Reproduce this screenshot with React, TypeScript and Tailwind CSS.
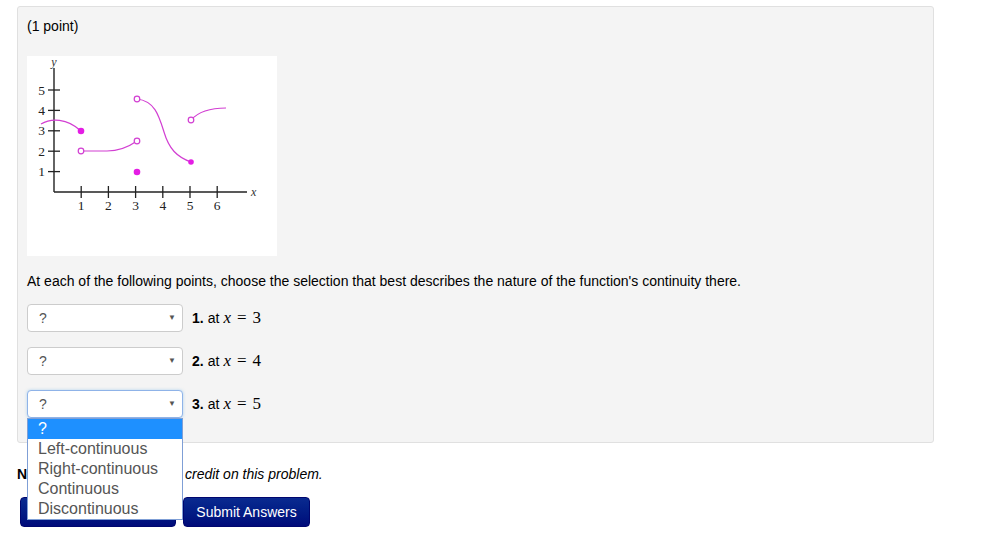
import React from "react";

const MAG = "#d23fd2";
const DOT = "#e41de4";

function Graph() {
  const xs = [1, 2, 3, 4, 5, 6];
  const ys = [1, 2, 3, 4, 5];
  const px = (k: number) => 27 + 27.2 * k;
  const py = (v: number) => 136 - 20.4 * v;
  return (
    <svg width="250" height="200" viewBox="0 0 250 200" className="block">
      <rect width="250" height="200" fill="#ffffff" />
      {/* axes */}
      <line x1="27" y1="12" x2="27" y2="136" stroke="#222" strokeWidth="1.4" />
      <line x1="27" y1="136" x2="220" y2="136" stroke="#222" strokeWidth="1.4" />
      <text x="27" y="10" fontFamily="'Liberation Serif', serif" fontStyle="italic" fontSize="12" textAnchor="middle" fill="#333">y</text>
      <text x="224" y="140" fontFamily="'Liberation Serif', serif" fontStyle="italic" fontSize="12" fill="#333">x</text>
      {ys.map((v) => (
        <g key={v}>
          <line x1="21" y1={py(v)} x2="33" y2={py(v)} stroke="#222" strokeWidth="1.3" />
          <text x="18" y={py(v) + 4.5} fontFamily="'Liberation Serif', serif" fontSize="13.5" textAnchor="end" fill="#222">{v}</text>
        </g>
      ))}
      {xs.map((k) => (
        <g key={k}>
          <line x1={px(k)} y1="130" x2={px(k)} y2="142" stroke="#222" strokeWidth="1.3" />
          <text x={px(k)} y="154" fontFamily="'Liberation Serif', serif" fontSize="13.5" textAnchor="middle" fill="#222">{k}</text>
        </g>
      ))}
      {/* curves */}
      <g fill="none" stroke={MAG} strokeWidth="1.2">
        <path d="M14 68 C 24 62, 40 62, 54 75" />
        <path d="M54 95 L 80 95 C 92 95, 100 92, 110 85" />
        <path d="M110 43 C 128 45, 132 60, 137 76 C 142 93, 150 101, 164 106" />
        <path d="M164 64 C 172 55, 185 52, 199 52" />
      </g>
      {/* filled points */}
      <circle cx="54" cy="75" r="3.3" fill={DOT} />
      <circle cx="110" cy="116" r="3.3" fill={DOT} />
      <circle cx="164" cy="106" r="2.8" fill={DOT} />
      {/* open points */}
      <g fill="#fff" stroke={MAG} strokeWidth="1.2">
        <circle cx="54" cy="95" r="2.8" />
        <circle cx="110" cy="85" r="2.8" />
        <circle cx="110" cy="43" r="2.8" />
        <circle cx="164" cy="64" r="2.8" />
      </g>
    </svg>
  );
}

function Select({ focused }: { focused?: boolean }) {
  return (
    <div
      className={
        "relative w-[156px] h-[28px] bg-white rounded-[4px] border flex items-center pl-[11px] text-[14px] text-[#555] " +
        (focused ? "border-[#8fb3e8] shadow-[0_0_3px_rgba(102,175,233,0.5)]" : "border-[#cccccc]")
      }
    >
      ?
      <span className="absolute right-[6px] top-[9px] text-[8px] leading-none text-[#555]">▼</span>
    </div>
  );
}

function Label({ n, v }: { n: number; v: number }) {
  return (
    <span className="text-[14px] text-black flex items-baseline gap-[4px]">
      <b>{n}.</b>
      <span>at</span>
      <span className="font-['Liberation_Serif',serif] text-[17px]">
        <i>x</i>
        <span className="mx-[6px]">=</span>
        {v}
      </span>
    </span>
  );
}

const options = ["?", "Left-continuous", "Right-continuous", "Continuous", "Discontinuous"];

export default function App() {
  return (
    <div className="min-h-screen bg-white font-['Liberation_Sans',Arial,sans-serif] text-[#222]">
      <div className="pt-[6px] pl-[17px]">
        <div className="w-[917px] h-[437px] bg-[#f4f4f4] border border-[#e0e0e0] rounded-[3px] pt-[10px] pl-[9px]">
          <p className="text-[14px] leading-[18px] text-black">(1 point)</p>
          <div className="mt-[21px]">
            <Graph />
          </div>
          <p className="mt-[16px] text-[14px] leading-[18px] text-black">
            At each of the following points, choose the selection that best describes the nature of the function's continuity there.
          </p>
          <div className="mt-[14px] flex flex-col gap-[15px]">
            {[3, 4, 5].map((v, i) => (
              <div key={v} className="relative flex items-center gap-[9px]">
                <Select focused={i === 2} />
                <Label n={i + 1} v={v} />
                {i === 2 && (
                  <ul className="absolute left-0 top-[28px] w-[156px] bg-white border border-[#7f9fd6] z-10 text-[16px] leading-[20px] text-[#555]">
                    {options.map((o, j) => (
                      <li
                        key={o}
                        className={
                          "pl-[10px] h-[20px] " + (j === 0 ? "bg-[#1e90ff] text-white" : "")
                        }
                      >
                        {o}
                      </li>
                    ))}
                  </ul>
                )}
              </div>
            ))}
          </div>
        </div>
      </div>
      <p className="mt-[22px] ml-[17px] text-[14px] leading-[18px] text-black whitespace-nowrap">
        <span className="inline-block w-[168px] overflow-hidden align-bottom">
          <b>Note:</b> <i>You can earn partial</i>
        </span>
        <i>credit on this problem.</i>
      </p>
      <div className="mt-[14px] ml-[20px] flex gap-[7px]">
        <button className="w-[156px] h-[30px] rounded-[4px] border border-[#00066e] bg-gradient-to-b from-[#0a2a90] to-[#000a7a] text-white text-[14px]">
          Preview My Answers
        </button>
        <button className="w-[127px] h-[30px] rounded-[4px] border border-[#00066e] bg-gradient-to-b from-[#0a2a90] to-[#000a7a] text-white text-[14px]">
          Submit Answers
        </button>
      </div>
    </div>
  );
}
